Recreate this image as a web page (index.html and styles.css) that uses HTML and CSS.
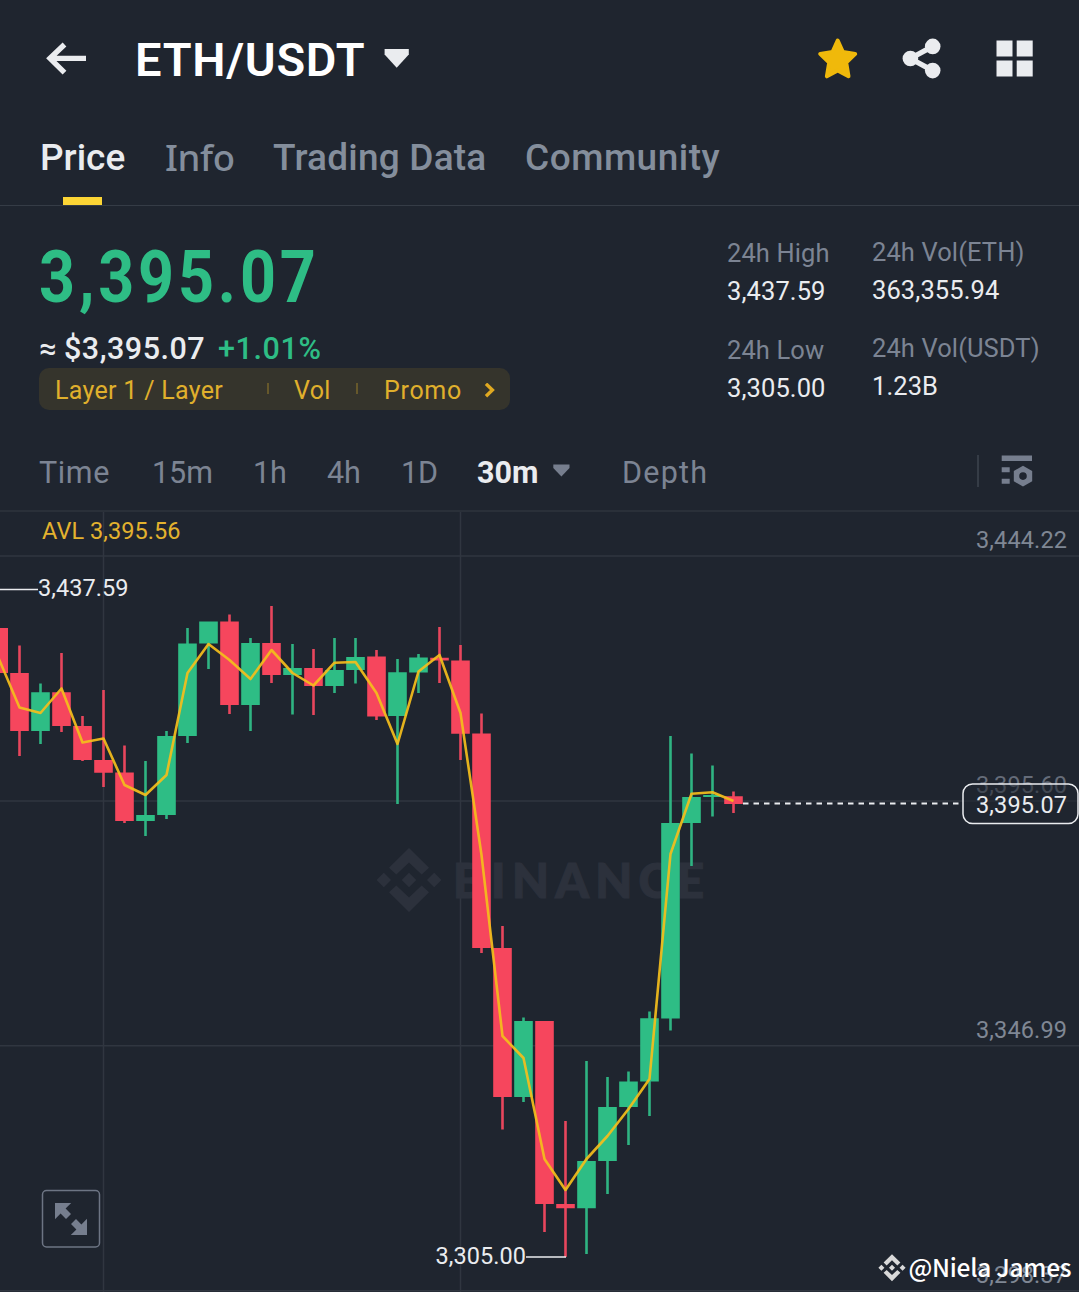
FILE: index.html
```html
<!DOCTYPE html>
<html lang="en">
<head>
<meta charset="utf-8">
<title>ETH/USDT</title>
<link rel="stylesheet" href="styles.css">
</head>
<body>
<main class="app">
  <header class="topbar">
    <svg class="back" width="42" height="34" viewBox="45 42 42 34"><path d="M86 58.4H50M64.5 44.5L50 58.4l14.500 14.300" fill="none" stroke="#eaecef" stroke-width="5.400"/></svg>
    <h1 class="pair">ETH/USDT</h1>
    <svg class="pair-caret" width="26" height="20" viewBox="384 49 26 20"><path d="M384.600 49h24.200v5.500L396.700 67.800 384.600 54.500z" fill="#eaecef"/></svg>
    <div class="actions">
      <svg width="42" height="44" viewBox="817 37 42 44"><path d="M837.700 40.500l5.200 11.600 12.300 1.800-9 8.700 2.300 13.700-10.800-5.700-10.800 5.700 2.300-13.700-9-8.700 12.300-1.800z" fill="#f0b90b" stroke="#f0b90b" stroke-width="4" stroke-linejoin="round"/></svg>
      <svg width="42" height="44" viewBox="901 37 42 44"><g fill="#eaecef"><circle cx="910.400" cy="58.500" r="7.800"/><circle cx="932.700" cy="46.400" r="7.800"/><circle cx="932.700" cy="70.600" r="7.800"/></g><path d="M932.700 46.400L910.400 58.500l22.300 12.100" fill="none" stroke="#eaecef" stroke-width="5.200"/></svg>
      <svg width="38" height="44" viewBox="996 37 38 44"><path d="M996.500 40.500h16v16h-16zM1016.700 40.500h16v16h-16zM996.500 60.500h16v16h-16zM1016.700 60.500h16v16h-16z" fill="#eaecef"/></svg>
    </div>
  </header>

  <nav class="tabs">
    <a class="tab tab-active">Price</a>
    <a class="tab tab-info">Info</a>
    <a class="tab tab-data">Trading Data</a>
    <a class="tab tab-community">Community</a>
  </nav>

  <section class="quote">
    <div class="quote-main">
      <div class="last-price">3,395.07</div>
      <div class="fiat"><span class="approx">≈</span><span class="usd">$3,395.07</span><span class="change">+1.01%</span></div>
      <div class="tags">
        <span class="tag-layer">Layer 1 / Layer</span><i class="tag-sep"></i>
        <span class="tag-vol">Vol</span><i class="tag-sep"></i>
        <span class="tag-promo">Promo</span>
        <svg width="14" height="16" viewBox="0 0 14 16"><path d="M3 .800l6.400 6.200L3 13.200" fill="none" stroke="#e0a921" stroke-width="3.400"/></svg>
      </div>
    </div>
    <dl class="stats stats-price">
      <dt>24h High</dt><dd>3,437.59</dd>
      <dt>24h Low</dt><dd>3,305.00</dd>
    </dl>
    <dl class="stats stats-volume">
      <dt>24h Vol(ETH)</dt><dd>363,355.94</dd>
      <dt>24h Vol(USDT)</dt><dd>1.23B</dd>
    </dl>
  </section>

  <nav class="intervals">
    <a class="iv-time">Time</a>
    <a>15m</a>
    <a>1h</a>
    <a>4h</a>
    <a>1D</a>
    <a class="iv-active">30m</a>
    <svg class="iv-caret" width="17" height="13" viewBox="0 0 17 13"><path d="M.3.500h16.200v3.500L8.400 12.500.3 4z" fill="#767e8e"/></svg>
    <a class="iv-depth">Depth</a>
    <i class="iv-sep"></i>
    <svg class="iv-settings" width="32" height="34" viewBox="1001 454 32 34"><path d="M1001.700 455.500H1032v5.500h-30.300zM1001.700 467.300h8v5h-8zM1001.700 478.800h8v5h-8z" fill="#767e8e"/><path fill-rule="evenodd" d="M1023 465.700l9.200 5.200v10.400l-9.200 5.200-9.200-5.200v-10.400zM1023 472.300a3.800 3.800 0 1 0 0 7.600 3.800 3.800 0 0 0 0-7.600z" fill="#767e8e"/></svg>
  </nav>

  <svg class="chart" width="1079" height="780" viewBox="0 512 1079 780">
    <defs>
      <g id="mark"><path d="M0-32L20-12.300 12.700-5.500 0-17.500-12.700-5.500-20-12.300zM0 32L20 12.300 12.700 5.500 0 17.500-12.700 5.500-20 12.300zM0-7.200L7.200 0 0 7.200-7.200 0zM-25.200-7.200L-18 0l-7.200 7.200L-32.400 0zM25.200-7.200L32.400 0l-7.200 7.200L18 0z"/></g>
    </defs>
    <path class="grid" d="M0 556h1079M0 801h1079M0 1045.700h1079M0 1290.700h1079M103.500 512v780M460.500 512v780"/>
    <g class="watermark"><use href="#mark" x="409" y="880"/><text x="453" y="897.500" textLength="251">BINANCE</text></g>

    <g class="axis">
      <text x="976" y="548" textLength="91">3,444.22</text>
      <text class="dim" x="976" y="793" textLength="91">3,395.60</text>
      <text x="976" y="1038" textLength="91">3,346.99</text>
      <text x="976" y="1283" textLength="91">3,298.37</text>
    </g>

    <path class="wick down" d="M19.500 645.500V756M61.500 653v79M82.500 716v45M103.500 690v97M124.500 745.500V823M229.500 614.500V714M271.500 606v77M313.500 649v66M376.500 650v70M439.500 627v56M460.500 645v115M481.500 713.500V953M502.500 926v203.500M544.500 1200v32M565.500 1121v136M733.500 791.500V813"/>
    <path class="wick up" d="M40.500 683.500V744M145.500 761v75M166.500 731v88M187.500 628v115M208.500 622v47M250.500 638v93M292.500 644v70.500M334.500 638v55M355.500 638v45.500M397.500 659v145M418.500 654v39M523.500 1017.500V1102M586.500 1061v193M607.500 1077v117M628.500 1071.500V1145M649.500 1011.500V1116M670.500 736v294.500M691.500 753.500V866M712.500 765.500v51"/>
    <path class="down-body" d="M0 628H8v45H0zM10.200 673h18.600v58H10.200zM52.200 692.300h18.600V726H52.200zM73.200 726h18.600v34H73.200zM94.200 760h18.600v12.700H94.200zM115.200 772.500h18.600V821h-18.600zM220.200 621.500h18.600V705h-18.600zM262.200 643h18.600v32h-18.600zM304.200 668h18.600v18h-18.600zM367.200 656.500h18.600v60h-18.600zM430.200 657.700h18.600v2.800h-18.600zM451.200 660.500h18.600v73.200h-18.600zM472.200 733.500h18.600V948h-18.600zM493.200 948h18.600v149h-18.600zM535.200 1021h18.600v183h-18.600zM556.200 1204h18.600v4.300h-18.600zM724.200 796.300h18.600v7.700h-18.600z"/>
    <path class="up-body" d="M31.200 692.300h18.600V731H31.200zM136.200 815h18.600v6h-18.600zM157.200 736h18.600v79h-18.600zM178.200 643.500h18.600V736h-18.600zM199.200 621.500h18.600v22h-18.600zM241.200 643h18.600v62h-18.600zM283.200 668h18.600v7h-18.600zM325.200 670h18.600v16h-18.600zM346.200 657h18.600v13h-18.600zM388.200 672.300h18.600V716h-18.600zM409.200 657.500h18.600v15h-18.600zM514.200 1021h18.600v76h-18.600zM577.200 1161h18.600v47.200h-18.600zM598.200 1107h18.600v54h-18.600zM619.200 1081.500h18.600V1107h-18.600zM640.200 1018.300h18.600v63.200h-18.600zM661.200 823h18.600v195.500h-18.600zM682.200 797h18.600v26h-18.600zM703.200 795h18.600v2h-18.600z"/>
    <polyline class="average" points="-1.500,658 19.500,707.500 40.500,713 61.500,688.500 82.500,742.500 103.500,738.500 124.500,785 145.500,795 166.500,775 187.500,673 208.500,644 229.500,660 250.500,679 271.500,650 292.500,673 313.500,685.500 334.500,662.700 355.500,662 376.500,693 397.500,744 418.500,671.500 439.500,655 460.500,713 481.500,855 502.500,1036 523.500,1058 544.500,1159 565.500,1190 586.500,1159 607.500,1136 628.500,1109 649.500,1079 670.500,854 691.500,793.700 712.500,792.300 733.500,801"/>

    <path class="pointer" d="M0 589.500h38M526 1257h40"/>
    <g class="labels">
      <text class="avl" x="42" y="539" textLength="138.500">AVL 3,395.56</text>
      <text x="38" y="596" textLength="90.500">3,437.59</text>
      <text x="435.500" y="1264" textLength="90.500">3,305.00</text>
    </g>

    <path class="last-line" d="M743 803.500h216"/>
    <rect class="last-box" x="963" y="784" width="115" height="39.500" rx="9.500"/>
    <text class="last-text" x="976" y="813" textLength="91">3,395.07</text>

    <rect class="expand-box" x="42.500" y="1190.500" width="57" height="56.500" rx="4"/>
    <path class="expand-arrows" d="M55 1203h16.200l-5.600 5.600 5.400 5.400-5 5-5.400-5.400-5.600 5.600zM87 1235H70.800l5.600-5.600-5.400-5.400 5-5 5.400 5.400 5.600-5.600z"/>

    <use class="signature-mark" href="#mark" transform="translate(892 1267.700) scale(.42)"/>
    <text class="signature" x="908.500" y="1277" textLength="163">@Niela James</text>
  </svg>
</main>
</body>
</html>
```
FILE: styles.css
```css
* { box-sizing: border-box; }

body {
  margin: 0;
  background: #1f252f;
  color: #eaecef;
  font-family: Roboto, "Liberation Sans", sans-serif;
}

.app { width: 1079px; height: 1292px; overflow: hidden; }
svg { display: block; flex: none; }

.topbar {
  display: flex;
  align-items: center;
  height: 118px;
  padding: 0 45px;
}
.pair {
  width: 249px;
  margin: 2px 0 0 48px;
  color: #fff;
  font-size: 47px;
  font-weight: 600;
  line-height: 60px;
  letter-spacing: .7px;
}
.actions { display: flex; margin-left: auto; }
.actions svg { margin-left: 42px; }
.actions svg:last-child { margin-left: 53px; }

.tabs {
  display: flex;
  height: 88px;
  padding-left: 40px;
  border-bottom: 1px solid #353c46;
  font-size: 37px;
  font-weight: 500;
  line-height: 79px;
  color: #848e9c;
  white-space: nowrap;
}
.tab { position: relative; width: 125px; letter-spacing: 0; }
.tab-active { color: #eaecef; }
.tab-active::after {
  content: "";
  position: absolute;
  left: 23px;
  bottom: 0;
  width: 39px;
  height: 8px;
  background: #fcd535;
}
.tab-info { width: 108px; font-family: "Noto Sans", sans-serif; font-size: 36.500px; letter-spacing: -.4px; }
.tab-data { width: 252px; letter-spacing: .2px; }
.tab-community { width: auto; letter-spacing: .5px; }

.quote { display: flex; height: 231px; padding: 0 39px; }
.quote-main { width: 688px; padding-top: 36px; }
.last-price {
  width: 320px;
  color: #2ebd85;
  font-size: 73px;
  font-weight: 700;
  line-height: 71px;
  height: 72px;
  letter-spacing: 4.500px;
  transform: scaleX(.86);
  transform-origin: 0 50%;
}
.fiat {
  display: flex;
  margin-top: 14px;
  font-size: 30.500px;
  font-weight: 500;
  line-height: 41px;
  height: 40px;
  letter-spacing: .5px;
}
.approx { width: 25px; }
.usd { width: 154px; }
.change { color: #2ebd85; letter-spacing: .6px; }

.tags {
  display: flex;
  align-items: center;
  width: 471px;
  height: 42px;
  padding: 3px 0 0 16px;
  border-radius: 10px;
  background: #35342c;
  color: #e0b02c;
  font-size: 25px;
  line-height: 39px;
  letter-spacing: .3px;
  white-space: nowrap;
}
.tag-layer { width: 212px; }
.tag-vol { width: 62px; margin-left: 25px; }
.tag-promo { width: 99px; margin-left: 26px; letter-spacing: .7px; }
.tag-sep { width: 2px; height: 11px; margin-top: -4px; background: #66582b; }

.stats { margin: 0; font-size: 25.500px; letter-spacing: .1px; white-space: nowrap; }
.stats dt { color: #7c8493; }
.stats dd { margin: 0 0 21px; }
.stats-price { width: 145px; padding-top: 28px; line-height: 38px; }
.stats-volume { padding-top: 28px; line-height: 37.500px; }

.intervals {
  display: flex;
  align-items: center;
  height: 75px;
  padding-left: 39px;
  border-bottom: 2px solid #2a3039;
  color: #7c8493;
  font-size: 30.500px;
  line-height: 71px;
  letter-spacing: 0;
}
.intervals a { margin: -2px 40px 0 0; }
.intervals .iv-time { margin-right: 42px; letter-spacing: .6px; }
.intervals .iv-active { width: 64px; margin: -2px 12px 0 -1px; color: #eaecef; font-weight: 700; }
.iv-caret { margin: -7px 52px 0 0; }
.intervals .iv-depth { width: 90px; margin-right: 0; letter-spacing: 1.200px; }
.iv-sep { width: 2px; height: 32px; margin: -6px 22px 0 auto; background: #353c46; }
.iv-settings { margin: -6px 46px 0 0; }

.chart { font: 23.500px Roboto, "Liberation Sans", sans-serif; }
.grid { fill: none; stroke: #303640; stroke-width: 1.500; }
.watermark { fill: #2c313c; }
.watermark text { font: 900 48px Lato, sans-serif; stroke: #2c313c; stroke-width: 1.200; }
.axis { fill: #7f8794; }
.axis .dim { fill: #656c79; }
.wick { fill: none; stroke-width: 2.600; }
.wick.down { stroke: #e8465d; }
.wick.up { stroke: #2fb482; }
.down-body { fill: #f6465d; }
.up-body { fill: #2ebd85; }
.average { fill: none; stroke: #f3bd1c; stroke-opacity: .93; stroke-width: 2.600; stroke-linejoin: round; }
.pointer { fill: none; stroke: #eaecef; stroke-width: 1.500; }
.labels { fill: #eaecef; }
.labels .avl { fill: #e3b22e; }
.last-line { stroke: #eaecef; stroke-width: 1.800; stroke-dasharray: 5.500 5; }
.last-box { fill: #1f252f; fill-opacity: .5; stroke: #eaecef; stroke-width: 1.500; }
.last-text { fill: #eaecef; }
.expand-box { fill: none; stroke: #6d7584; stroke-width: 1.500; }
.expand-arrows { fill: #767e8e; }
.signature-mark { fill: #d9d9d9; }
.signature { fill: #fff; font: 500 24.500px "Noto Sans CJK SC", sans-serif; }
```
